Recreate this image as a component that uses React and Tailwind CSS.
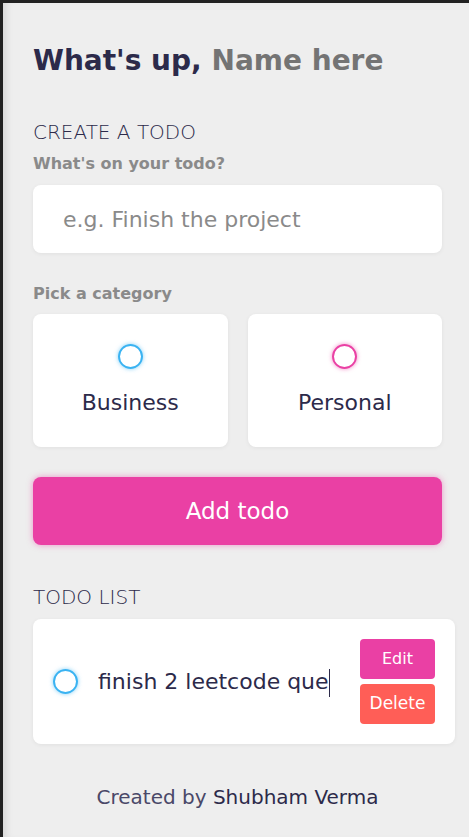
import React from 'react';

const font = { fontFamily: '"DejaVu Sans", sans-serif' };

const App = () => {
  return (
    <div className="min-h-screen bg-[#222222] pl-[3px] pt-[3px]" style={font}>
      <div className="min-h-[834px] bg-[#eeeeee] pl-[30px] pr-[27px] pt-[41px] pb-6 shadow-[inset_8px_0_8px_-6px_rgba(0,0,0,0.12)]">
        <h1 className="text-[28px] leading-[34px] font-bold text-[#2c2a4a]">
          What's up, <span className="text-[#747474]">Name here</span>
        </h1>

        <h4 className="mt-[42px] text-[20px] leading-[24px] font-light text-[#2c2a4a]">CREATE A TODO</h4>
        <p className="mt-[10px] text-[16px] leading-[19px] font-bold text-[#8a8a8a]">What's on your todo?</p>
        <div className="mt-[12px] flex h-[68px] items-center rounded-lg bg-white px-[30px] shadow-[0_1px_4px_rgba(0,0,0,0.06)]">
          <span className="text-[22px] text-[#8a8a8a]">e.g. Finish the project</span>
        </div>

        <p className="mt-[31px] text-[16px] leading-[19px] font-bold text-[#8a8a8a]">Pick a category</p>
        <div className="mt-[11px] grid grid-cols-2 gap-5">
          <div className="flex h-[133px] flex-col items-center rounded-lg bg-white pt-[30px] shadow-[0_1px_4px_rgba(0,0,0,0.06)]">
            <span className="h-[25px] w-[25px] rounded-full border-2 border-[#3ab3f2] shadow-[0_0_4px_rgba(58,179,242,0.6)]" />
            <span className="mt-[20px] text-[22px] leading-[28px] text-[#2c2a4a]">Business</span>
          </div>
          <div className="flex h-[133px] flex-col items-center rounded-lg bg-white pt-[30px] shadow-[0_1px_4px_rgba(0,0,0,0.06)]">
            <span className="h-[25px] w-[25px] rounded-full border-2 border-[#ea40a4] shadow-[0_0_4px_rgba(234,64,164,0.6)]" />
            <span className="mt-[20px] text-[22px] leading-[28px] text-[#2c2a4a]">Personal</span>
          </div>
        </div>

        <button className="mt-[30px] flex h-[68px] w-full items-center justify-center rounded-lg bg-[#ea40a4] text-[23px] text-white shadow-[0_0_6px_rgba(234,64,164,0.5)]">
          Add todo
        </button>

        <h4 className="mt-[40px] text-[20px] leading-[24px] font-light text-[#2c2a4a]">TODO LIST</h4>
        <div className="mt-[10px] mr-[-13px] flex h-[125px] items-center rounded-lg bg-white pl-[20px] pr-[20px] shadow-[0_1px_4px_rgba(0,0,0,0.06)]">
          <span className="h-[25px] w-[25px] shrink-0 rounded-full border-2 border-[#3ab3f2] shadow-[0_0_4px_rgba(58,179,242,0.6)]" />
          <span className="ml-[20px] flex-1 text-[22px] text-[#2c2a4a]">
            finish 2 leetcode que<span className="inline-block h-[28px] w-px bg-[#2c2a4a] align-middle" />
          </span>
          <div className="flex flex-col gap-[5px]">
            <button className="h-[40px] w-[75px] rounded bg-[#ea40a4] text-[16px] text-white">Edit</button>
            <button className="h-[40px] w-[75px] rounded bg-[#ff5e57] text-[17px] text-white">Delete</button>
          </div>
        </div>

        <p className="mt-[38px] text-center text-[20px] text-[#4a4868]">
          Created by <span className="text-[#2c2a4a]">Shubham Verma</span>
        </p>
      </div>
    </div>
  );
};

export default App;
